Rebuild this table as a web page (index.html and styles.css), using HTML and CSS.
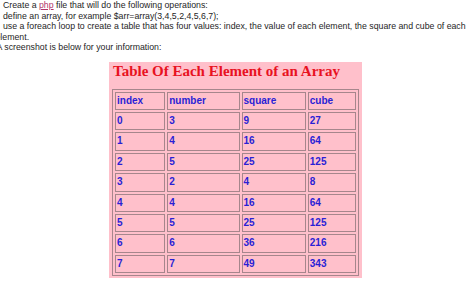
FILE: index.html
```html
<!DOCTYPE html>
<html>
<head>
<meta charset="utf-8">
<link rel="stylesheet" href="styles.css">
</head>
<body>
<div class="intro">
  <div class="line ind">Create a <a class="lnk" href="#">php</a> file that will do the following operations:</div>
  <div class="line ind">define an array, for example $arr=array(3,4,5,2,4,5,6,7);</div>
  <div class="line ind">use a foreach loop to create a table that has four values: index, the value of each element, the square and cube of each</div>
  <div class="line out">element.</div>
  <div class="line out2">A screenshot is below for your information:</div>
</div>
<div class="shot">
  <h1 class="title">Table Of Each Element of an Array</h1>
  <table class="grid">
    <colgroup><col class="c1"><col class="c2"><col class="c3"><col class="c4"></colgroup>
    <tr><td>index</td><td>number</td><td>square</td><td>cube</td></tr>
    <tr><td>0</td><td>3</td><td>9</td><td>27</td></tr>
    <tr><td>1</td><td>4</td><td>16</td><td>64</td></tr>
    <tr><td>2</td><td>5</td><td>25</td><td>125</td></tr>
    <tr><td>3</td><td>2</td><td>4</td><td>8</td></tr>
    <tr><td>4</td><td>4</td><td>16</td><td>64</td></tr>
    <tr><td>5</td><td>5</td><td>25</td><td>125</td></tr>
    <tr><td>6</td><td>6</td><td>36</td><td>216</td></tr>
    <tr><td>7</td><td>7</td><td>49</td><td>343</td></tr>
  </table>
</div>
</body>
</html>
```
FILE: styles.css
```css
html, body {
  margin: 0;
  padding: 0;
  background: #ffffff;
  overflow: hidden;
}
.intro {
  font-family: "Liberation Sans", Arial, sans-serif;
  font-size: 8.75px;
  line-height: 10.5px;
  color: #1e1e1e;
}
.line {
  white-space: nowrap;
}
.ind {
  padding-left: 3px;
}
.out {
  margin-left: -4.5px;
}
.out2 {
  margin-left: -3.5px;
}
.lnk {
  color: #b2346a;
  text-decoration: underline;
}
.shot {
  margin: 9px 0 0 109px;
  width: 253px;
  height: 216px;
  background: #ffc0cb;
  box-sizing: border-box;
  padding: 1px 3px 0 3px;
}
.title {
  margin: 0 0 0 1px;
  font-family: "Liberation Serif", "Times New Roman", serif;
  font-size: 15px;
  font-weight: bold;
  line-height: 16px;
  color: #e8121f;
}
.grid {
  margin-top: 10px;
  width: 247px;
  table-layout: fixed;
  border-collapse: separate;
  border-spacing: 2px;
  border: 1px solid #a6868c;
}
.c1 { width: 50px; }
.c2 { width: 72px; }
.c3 { width: 64px; }
.c4 { width: 48px; }
.grid td {
  border: 1px solid #a6868c;
  padding: 1px 1px;
  height: 14.4px;
  font-family: "Liberation Sans", Arial, sans-serif;
  font-size: 10px;
  font-weight: bold;
  line-height: 14.4px;
  color: #2a1fd6;
  text-align: left;
  vertical-align: middle;
}
```
